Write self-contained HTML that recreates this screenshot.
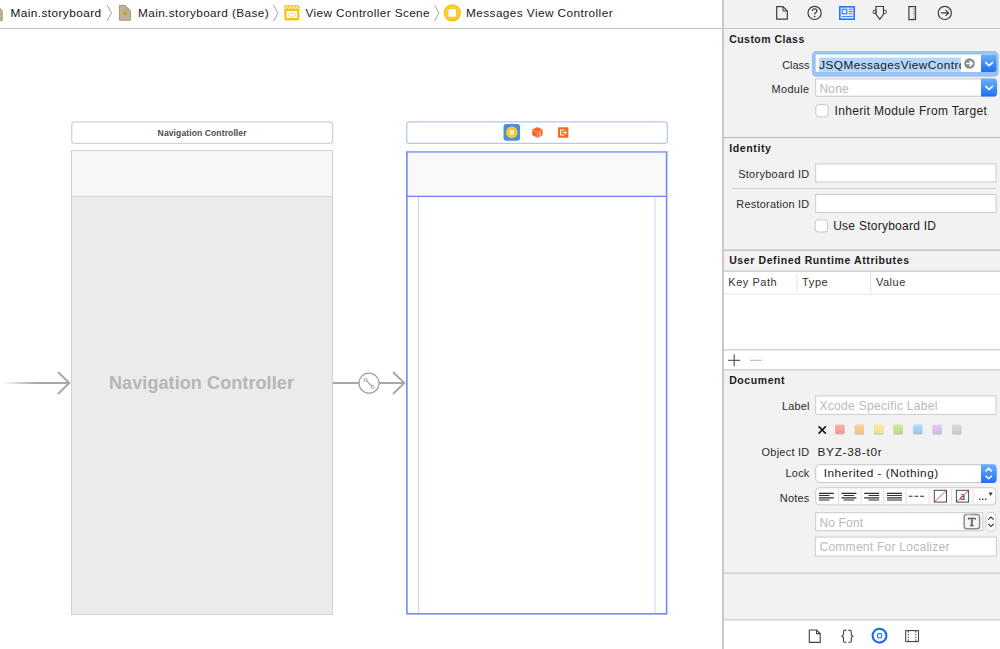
<!DOCTYPE html>
<html><head><meta charset="utf-8">
<style>
*{box-sizing:border-box;margin:0;padding:0}
html,body{width:1000px;height:649px;overflow:hidden;background:#fff;font-family:"Liberation Sans",sans-serif;}
.a{position:absolute}
.t{position:absolute;white-space:nowrap}
.fld{position:absolute;background:#fff;border:1px solid #cdcdcd;border-top-color:#c2c2c2}
.cb{position:absolute;width:14px;height:14px;background:#fff;border:1px solid #c4c4c4;border-radius:3.5px;box-shadow:0 .5px 0 rgba(0,0,0,.06)}
.hl{position:absolute;height:1px;background:#c4c4c4}
.sw{position:absolute;width:10px;height:9.5px;border-radius:1.5px;top:424.4px;box-shadow:0 1px 1px rgba(0,0,0,.22)}
.bbtn{position:absolute;width:16px;border-radius:0 3.5px 3.5px 0;background:linear-gradient(#62abfb,#1b6ff5)}
</style></head><body>
<!-- top jump bar -->
<div class="a" style="left:0;top:0;width:723px;height:29px;background:#fff;border-bottom:1px solid #c2c2c2"></div>
<svg class="a" style="left:0;top:0" width="723" height="28" viewBox="0 0 723 28">
  <path d="M-6 5.4 H-3.2 L2.2 10.6 V20.4 H-6 Z" fill="#b8b3a8" stroke="#b0965f" stroke-width="1"/>
  <g fill="none" stroke="#a4a4a4" stroke-width="1">
    <path d="M107 5 L111.5 13 L107 21"/>
    <path d="M273.5 5 L278 13 L273.5 21"/>
    <path d="M434.5 5 L439 13 L434.5 21"/>
  </g>
  <g>
    <path d="M119.4 5.4 H125 L130.4 10.6 V20.2 H119.4 Z" fill="#b8b3a8" stroke="#b0965f" stroke-width="1"/>
    <path d="M125 5.4 L130.4 10.6 H125 Z" fill="#a8a296" opacity=".55"/>
    <circle cx="125" cy="13.3" r="2.1" fill="#c9a114"/>
    <path d="M121.2 9.6 H124 M125 15.6 V18 H128.6" stroke="#cdb98a" stroke-width="0.8" fill="none"/>
  </g>
  <g>
    <rect x="284.3" y="5.3" width="15" height="15.2" rx="1.6" fill="#f6c416"/>
    <rect x="284.9" y="6.2" width="14.6" height="2.5" fill="#fff"/>
    <path d="M285 5.6 l2.4 3.3 M288.1 5.6 l2.4 3.3 M291.2 5.6 l2.4 3.3 M294.3 5.6 l2.4 3.3 M297.4 5.6 l2.2 3" stroke="#f6c416" stroke-width="1.5"/>
    <rect x="286.6" y="11" width="10.5" height="7" fill="#fff"/>
    <rect x="288.3" y="13" width="6.8" height="3.2" rx="1" fill="#fff" stroke="#f3cf7a" stroke-width="0.9"/>
  </g>
  <g>
    <circle cx="452.35" cy="12.8" r="8.6" fill="#f4bf12"/>
    <circle cx="452.35" cy="12.8" r="7.3" fill="#fad133"/>
    <rect x="447.3" y="8.1" width="9.6" height="9.6" rx="2" fill="#f3c535"/>
    <rect x="448.4" y="9.1" width="7.5" height="7.6" rx="1" fill="#fff"/>
  </g>
</svg>

<!-- canvas -->
<!-- nav controller title -->
<svg class="a" style="left:68px;top:118px" width="604" height="30" viewBox="68 118 604 30"><rect x="71.7" y="121.8" width="260.9" height="21.6" rx="3.2" fill="#fff" stroke="#d2d2d2" stroke-width="1.3"/><rect x="406.7" y="121.8" width="260.7" height="21.6" rx="3.2" fill="#fff" stroke="#b2caec" stroke-width="1.3"/></svg>
<!-- nav controller scene -->
<div class="a" style="left:71px;top:150px;width:262px;height:465px;border:1px solid #d2d2d2;background:#ebebeb"></div>
<div class="a" style="left:72px;top:151px;width:260px;height:46px;background:#f7f7f7;border-bottom:1px solid #d4d4d4"></div>
<!-- arrows -->
<svg class="a" style="left:0;top:360px" width="420" height="46" viewBox="0 360 420 46">
  <defs><linearGradient id="fade" x1="0" x2="1" y1="0" y2="0" gradientUnits="objectBoundingBox"><stop offset="0" stop-color="#a8a8a8" stop-opacity="0"/><stop offset="0.5" stop-color="#a8a8a8" stop-opacity="1"/><stop offset="1" stop-color="#a8a8a8"/></linearGradient></defs>
  <rect x="2" y="382" width="67" height="2" fill="url(#fade)"/>
  <path d="M58 372 L69.3 383 L58 394" fill="none" stroke="#a8a8a8" stroke-width="2"/>
  <path d="M333 383 H404" stroke="#a8a8a8" stroke-width="2"/>
  <path d="M393 372 L404.3 383 L393 394" fill="none" stroke="#a8a8a8" stroke-width="2"/>
  <circle cx="369" cy="383.2" r="10" fill="#fff" stroke="#a2a2a2" stroke-width="1.3"/>
  <path d="M365.6 379.9 L372.6 386.8" stroke="#a2a2a2" stroke-width="1.2"/>
  <circle cx="365.5" cy="379.8" r="1.5" fill="#fff" stroke="#a2a2a2" stroke-width="1"/>
  <circle cx="372.7" cy="386.9" r="1.5" fill="#fff" stroke="#a2a2a2" stroke-width="1"/>
</svg>
<!-- messages VC title -->

<svg class="a" style="left:500px;top:122px" width="72" height="21" viewBox="500 122 72 21">
  <rect x="503.5" y="124" width="16.6" height="16.8" rx="3" fill="#4a90d9"/>
  <circle cx="511.8" cy="132.4" r="5.8" fill="#fbc72e"/>
  <rect x="509.8" y="130.4" width="4" height="4" fill="#fff"/>
  <!-- cube -->
  <path d="M537.4 127 L542.6 129.6 V135.2 L537.4 137.8 L532.2 135.2 V129.6 Z" fill="#f2692a"/>
  <path d="M532.6 130 L537.4 132.3 L542.3 130 M537.4 132.3 V137.4" stroke="#fbb796" stroke-width="0.7" fill="none"/>
  <path d="M540 132.6 V135.6" stroke="#fff" stroke-width="1"/>
  <!-- exit -->
  <rect x="558" y="127.2" width="10.4" height="10.6" rx="0.8" fill="#f36c21"/>
  <path d="M564.6 130 H560.6 V135 H564.6" stroke="#fff" stroke-width="1.1" fill="none"/>
  <path d="M562.6 132.5 H566.2 M565 131 L566.6 132.5 L565 134" stroke="#fff" stroke-width="1" fill="none"/>
</svg>
<!-- messages VC scene -->
<svg class="a" style="left:400px;top:146px" width="274" height="476" viewBox="400 146 274 476">
  <rect x="406.9" y="151.8" width="259.7" height="262" fill="#fff"/>
  <rect x="406.9" y="151.8" width="259.7" height="44.6" fill="#f9f9f9"/>
  <rect x="418" y="197" width="1" height="416.5" fill="#cfd4fc"/>
  <rect x="654.6" y="197" width="1" height="416.5" fill="#cfd4fc"/>
  <path d="M406 196.4 H667" stroke="#6d80f1" stroke-width="1.3"/>
  <rect x="406.9" y="151.8" width="259.7" height="462" fill="none" stroke="#7389f3" stroke-width="1.6"/>
  <path d="M406 151.4 H667.5" stroke="#c4cffb" stroke-width="1" opacity=".55"/>
</svg>
<!-- sidebar -->
<div class="a" id="side" style="left:722px;top:0;width:278px;height:649px;background:#f2f2f2;border-left:2px solid #c9c9c9"></div>
<div class="hl" style="left:724px;top:28px;width:276px;background:#c2c2c2"></div><div class="hl" style="left:724px;top:29px;width:276px;background:#f8f8f8"></div>
<!-- inspector tabs -->
<svg class="a" style="left:770px;top:0" width="190" height="28" viewBox="770 0 190 28">
  <g fill="none" stroke="#3e3e3e" stroke-width="1.2">
    <path d="M776.7 6.7 H783 L787.3 11 V19.1 H776.7 Z"/>
    <path d="M783 6.7 V11 H787.3" stroke-width="1"/>
    <circle cx="814.6" cy="12.9" r="6.6"/>
    <path d="M812.4 10.9 C812.4 8.2 816.9 8.2 816.9 10.9 C816.9 12.6 814.6 12.5 814.6 14.6" stroke-width="1.25"/>
    <circle cx="944.8" cy="12.9" r="6.6"/>
    <path d="M940.8 12.9 H948.3 M945.5 9.9 L948.6 12.9 L945.5 15.9"/>
    <path d="M876 6.5 H883.5 V14.4 L879.75 19.3 L876 14.4 Z"/>
    <rect x="873.2" y="10.3" width="2.8" height="3.2" rx=".8" stroke-width="1"/>
    <rect x="883.5" y="10.3" width="2.8" height="3.2" rx=".8" stroke-width="1"/>
    <rect x="908.9" y="6.6" width="6.6" height="13"/>
    <path d="M912.8 9 H915.6 M913.6 11.2 H915.6 M912.8 13.4 H915.6 M913.6 15.6 H915.6 M912.8 17.8 H915.6" stroke-width="0.8" stroke="#777"/>
  </g>
  <circle cx="814.6" cy="16.6" r=".85" fill="#3e3e3e"/>
  <rect x="839" y="6" width="16" height="14" fill="#2277f6"/>
  <rect x="840.6" y="7.6" width="12.8" height="10.8" fill="#e4eefe"/>
  <rect x="841.6" y="8.6" width="5.8" height="5.8" fill="#4a8ff7"/>
  <circle cx="844.5" cy="11.5" r="1.7" fill="#fff"/>
  <path d="M848.8 9.3 H852.6 M848.8 11.5 H852.6 M848.8 13.7 H852.6 M841.8 16.5 H852.6" stroke="#3a85f7" stroke-width="1.1"/>
</svg>

<!-- Custom class -->
<svg class="a" style="left:808px;top:48px" width="192" height="52" viewBox="808 48 192 52">
  <defs><linearGradient id="bb" x1="0" x2="0" y1="0" y2="1"><stop offset="0" stop-color="#6ab2fb"/><stop offset="1" stop-color="#1c70f4"/></linearGradient></defs>
  <rect x="811.9" y="51.1" width="186.8" height="25.6" rx="4.5" fill="#98c3f4"/>
  <path d="M815.7 54.5 H993.5 a3.2 3.2 0 0 1 3.2 3.2 V68.8 a3.2 3.2 0 0 1 -3.2 3.2 H815.7 Z" fill="#fff"/>
  <rect x="818.9" y="57.6" width="141.9" height="14.2" fill="#b4d6fc"/>
  <path d="M981 54.4 H993.5 a3.2 3.2 0 0 1 3.2 3.2 V68.8 a3.2 3.2 0 0 1 -3.2 3.2 H981 Z" fill="url(#bb)"/>
  <circle cx="969.5" cy="63.5" r="5.3" fill="#8c8c8c"/>
  <path d="M966.2 63.5 H971.6 M969.6 60.9 L972.4 63.5 L969.6 66.1" stroke="#fff" stroke-width="1.5" fill="none"/>
  <path d="M985.3 62.2 L989.1 65.7 L992.9 62.2" stroke="#fff" stroke-width="1.7" fill="none"/>
  <!-- module -->
  <path d="M815.7 78.9 H993.5 a3.2 3.2 0 0 1 3.2 3.2 V93 a3.2 3.2 0 0 1 -3.2 3.2 H815.7 Z" fill="#fff" stroke="#cacaca" stroke-width="1"/>
  <path d="M981 78.4 H993.6 a3.4 3.4 0 0 1 3.4 3.4 V93.2 a3.4 3.4 0 0 1 -3.4 3.4 H981 Z" fill="url(#bb)"/>
  <path d="M985.3 85.9 L989.1 89.4 L992.9 85.9" stroke="#fff" stroke-width="1.7" fill="none"/>
</svg>
<svg class="a" style="left:722px;top:98px" width="278" height="551" viewBox="722 98 278 551">
  <defs>
    <linearGradient id="bb2" x1="0" x2="0" y1="0" y2="1"><stop offset="0" stop-color="#6ab2fb"/><stop offset="1" stop-color="#1c70f4"/></linearGradient>
    <linearGradient id="g1" x1="0" x2="0" y1="0" y2="1"><stop offset="0" stop-color="#fbb0ab"/><stop offset="1" stop-color="#f79691"/></linearGradient>
    <linearGradient id="g2" x1="0" x2="0" y1="0" y2="1"><stop offset="0" stop-color="#fcd4a2"/><stop offset="1" stop-color="#f8c17f"/></linearGradient>
    <linearGradient id="g3" x1="0" x2="0" y1="0" y2="1"><stop offset="0" stop-color="#faeca4"/><stop offset="1" stop-color="#f5df7e"/></linearGradient>
    <linearGradient id="g4" x1="0" x2="0" y1="0" y2="1"><stop offset="0" stop-color="#d1e8a2"/><stop offset="1" stop-color="#bcdd7e"/></linearGradient>
    <linearGradient id="g5" x1="0" x2="0" y1="0" y2="1"><stop offset="0" stop-color="#b8d9fc"/><stop offset="1" stop-color="#9ac7f9"/></linearGradient>
    <linearGradient id="g6" x1="0" x2="0" y1="0" y2="1"><stop offset="0" stop-color="#e6cdf2"/><stop offset="1" stop-color="#d8b7e8"/></linearGradient>
    <linearGradient id="g7" x1="0" x2="0" y1="0" y2="1"><stop offset="0" stop-color="#dbdbdb"/><stop offset="1" stop-color="#c9c9c9"/></linearGradient>
  </defs>
  <!-- checkboxes -->
  <rect x="815.8" y="104.6" width="12.5" height="12.2" rx="3" fill="#fff" stroke="#c6c6c6" stroke-width="1"/>
  <rect x="815.2" y="219.8" width="12.5" height="12.2" rx="3" fill="#fff" stroke="#c6c6c6" stroke-width="1"/>
  <!-- dividers -->
  <rect x="724" y="136.9" width="277" height="1.2" fill="#c0c0c0"/>
  <rect x="732" y="188" width="264" height="1" fill="#d3d3d3"/>
  <rect x="724" y="249.5" width="277" height="1.5" fill="#c3c3c3"/>
  <rect x="724" y="572.6" width="277" height="1.1" fill="#c3c3c3"/>
  <!-- identity fields -->
  <rect x="815.7" y="163.9" width="180.4" height="18" fill="#fff" stroke="#cbcbcb" stroke-width="1"/>
  <rect x="815.7" y="194.5" width="180.4" height="18" fill="#fff" stroke="#cbcbcb" stroke-width="1"/>
  <!-- table -->
  <rect x="724" y="271" width="277" height="99" fill="#fff"/>
  <rect x="724" y="270.6" width="277" height="1.1" fill="#c2c2c2"/>
  <rect x="724" y="293.8" width="277" height="1" fill="#e3e3e3"/>
  <rect x="796.4" y="273.4" width="1" height="18.6" fill="#e0e0e0"/>
  <rect x="870.1" y="273.4" width="1" height="18.6" fill="#e0e0e0"/>
  <rect x="724" y="349.3" width="277" height="1.1" fill="#c6c6c6"/>
  <rect x="724" y="369.3" width="277" height="1.1" fill="#c2c2c2"/>
  <path d="M728.2 360.3 H740.2 M734.2 354.3 V366.3" stroke="#3c3c3c" stroke-width="1"/>
  <path d="M750 360.3 H761.8" stroke="#b4b4b4" stroke-width="1"/>
  <!-- document -->
  <rect x="815.7" y="395.9" width="180.4" height="18.5" fill="#fff" stroke="#cbcbcb" stroke-width="1"/>
  <path d="M818.6 426.4 L825.8 433.6 M825.8 426.4 L818.6 433.6" stroke="#1a1a1a" stroke-width="1.6"/>
  <g opacity=".22" fill="#000"><rect x="835.3" y="425.6" width="9.2" height="8.8" rx="1.2"/><rect x="854.8" y="425.6" width="9.2" height="8.8" rx="1.2"/><rect x="874.2" y="425.6" width="9.2" height="8.8" rx="1.2"/><rect x="893.6" y="425.6" width="9.2" height="8.8" rx="1.2"/><rect x="913.1" y="425.6" width="9.2" height="8.8" rx="1.2"/><rect x="932.6" y="425.6" width="9.2" height="8.8" rx="1.2"/><rect x="952.2" y="425.6" width="9.2" height="8.8" rx="1.2"/></g>
  <rect x="835.2" y="424.5" width="9.2" height="9.1" rx="1" fill="url(#g1)"/>
  <rect x="854.7" y="424.5" width="9.2" height="9.1" rx="1" fill="url(#g2)"/>
  <rect x="874.1" y="424.5" width="9.2" height="9.1" rx="1" fill="url(#g3)"/>
  <rect x="893.6" y="424.5" width="9.2" height="9.1" rx="1" fill="url(#g4)"/>
  <rect x="913.1" y="424.5" width="9.2" height="9.1" rx="1" fill="url(#g5)"/>
  <rect x="932.6" y="424.5" width="9.2" height="9.1" rx="1" fill="url(#g6)"/>
  <rect x="952.1" y="424.5" width="9.2" height="9.1" rx="1" fill="url(#g7)"/>
  <!-- lock popup -->
  <rect x="815.7" y="464.7" width="180.4" height="17.8" rx="3.6" fill="#fff" stroke="#c6c6c6" stroke-width="1"/>
  <path d="M981 464.2 H992.8 a3.8 3.8 0 0 1 3.8 3.8 V479.2 a3.8 3.8 0 0 1 -3.8 3.8 H981 Z" fill="url(#bb2)"/>
  <path d="M985.6 471.4 L988.7 468.4 L991.8 471.4 M985.6 475.8 L988.7 478.8 L991.8 475.8" stroke="#fff" stroke-width="1.5" fill="none"/>
  <!-- notes segmented -->
  <rect x="815.7" y="487.7" width="180" height="17.2" rx="3.6" fill="#fdfdfd" stroke="#cdcdcd" stroke-width="1"/>
  <g stroke="#e2e2e2" stroke-width="1"><path d="M838.5 488.4 V504.4 M861 488.4 V504.4 M883.7 488.4 V504.4 M906 488.4 V504.4 M929.2 488.4 V504.4 M951.6 488.4 V504.4 M973 488.4 V504.4"/></g>
  <g stroke="#2e2e2e" stroke-width="1.15">
    <path d="M819 493.3 H833.8 M819 495.5 H829.5 M819 497.8 H833.8 M819 500 H829.5"/>
    <path d="M841.4 493.3 H856.4 M843.6 495.5 H854.2 M841.4 497.8 H856.4 M843.6 500 H854.2"/>
    <path d="M864.2 493.3 H879.2 M868.5 495.5 H879.2 M864.2 497.8 H879.2 M868.5 500 H879.2"/>
    <path d="M887 493.3 H902 M887 495.5 H902 M887 497.8 H902 M887 500 H902"/>
    <path d="M908.8 496.2 H912.6 M914.5 496.2 H918.3 M920.2 496.2 H924"/>
  </g>
  <rect x="934.3" y="490.3" width="12.2" height="11.8" fill="#fff" stroke="#4a4a4a" stroke-width="1"/>
  <path d="M934.8 501.6 L946 490.8" stroke="#f03a3a" stroke-width="0.9"/>
  <rect x="956.4" y="490.3" width="12.2" height="11.8" fill="#fff" stroke="#4a4a4a" stroke-width="1"/>
  <text x="962.5" y="499.8" font-family="Liberation Serif" font-size="11.5" text-anchor="middle" fill="#222">a</text>
  <path d="M956.9 501.6 L968.1 490.8" stroke="#f03a3a" stroke-width="0.9"/>
  <g fill="#333"><rect x="979" y="498.6" width="1.4" height="1.4"/><rect x="982" y="498.6" width="1.4" height="1.4"/><rect x="985" y="498.6" width="1.4" height="1.4"/><path d="M988.6 492.4 H992.6 L990.6 496 Z"/></g>
  <!-- font field -->
  <rect x="815.7" y="512.7" width="167" height="18" fill="#fff" stroke="#cbcbcb" stroke-width="1"/>
  <rect x="964.2" y="514.4" width="15.4" height="14.4" rx="2.2" fill="#f6f6f6" stroke="#8c8c8c" stroke-width="1.5"/>
  <path d="M966.4 514.3 H970.4" stroke="#c4c4c4" stroke-width="1"/>
  <text x="971.9" y="526.2" font-family="Liberation Serif" font-size="12.5" text-anchor="middle" fill="#4a4a4a" stroke="#4a4a4a" stroke-width=".3">T</text>
  <rect x="986" y="512.3" width="9.8" height="19" rx="4.9" fill="#fff" stroke="#cfcfcf" stroke-width="1"/>
  <path d="M988.2 519.6 L990.9 517 L993.6 519.6 M988.2 524 L990.9 526.6 L993.6 524" stroke="#333" stroke-width="1.1" fill="none"/>
  <!-- comment field -->
  <rect x="815.3" y="537.1" width="181" height="19" fill="#fff" stroke="#cbcbcb" stroke-width="1"/>
  <!-- library bar -->
  <rect x="724" y="619.4" width="277" height="30" fill="#fff"/>
  <rect x="724" y="619.3" width="277" height="1.1" fill="#c4c4c4"/>
  <g fill="none" stroke="#444" stroke-width="1.1">
    <path d="M809.3 630 H816.6 L820.2 633.6 V642.4 H809.3 Z"/>
    <path d="M816.6 630 V633.6 H820.2"/>
    <path d="M846.4 630.1 C843.6 630.1 843.5 630.8 843.5 632.6 V634 C843.5 635.5 843 636.2 841.4 636.2 C843 636.2 843.5 636.9 843.5 638.4 V639.9 C843.5 641.7 843.6 642.3 846.4 642.3"/>
    <path d="M848.4 630.1 C851.2 630.1 851.3 630.8 851.3 632.6 V634 C851.3 635.5 851.8 636.2 853.4 636.2 C851.8 636.2 851.3 636.9 851.3 638.4 V639.9 C851.3 641.7 851.2 642.3 848.4 642.3"/>
    <rect x="905.7" y="630.6" width="12.8" height="11"/>
    <path d="M908.4 631 V641.6 M915.8 631 V641.6" stroke-dasharray="1.5 1.3" stroke-width="1"/>
  </g>
  <circle cx="879.5" cy="635.7" r="6.9" fill="#fff" stroke="#1a6cf2" stroke-width="2.1"/>
  <rect x="877.5" y="633.5" width="4.2" height="4.4" rx="0.6" fill="#e4edfd" stroke="#1a6cf2" stroke-width="1"/>
</svg>
<div class="t " style="left:10.4px;top:5px;font-size:11.8px;line-height:17px;letter-spacing:0.440px;color:#111;">Main.storyboard</div>
<div class="t " style="left:138.0px;top:5px;font-size:11.8px;line-height:17px;letter-spacing:0.381px;color:#1a1a1a;">Main.storyboard (Base)</div>
<div class="t " style="left:305.6px;top:5px;font-size:11.8px;line-height:17px;letter-spacing:0.376px;color:#1a1a1a;">View Controller Scene</div>
<div class="t " style="left:466.0px;top:5px;font-size:11.8px;line-height:17px;letter-spacing:0.424px;color:#1a1a1a;">Messages View Controller</div>
<div class="t " style="left:157.6px;top:127px;font-size:8.6px;line-height:13px;letter-spacing:0.077px;color:#4c4c4c;font-weight:bold;">Navigation Controller</div>
<div class="t " style="left:109.0px;top:371px;font-size:18px;line-height:25px;letter-spacing:0.094px;color:#b6b6b6;font-weight:bold;">Navigation Controller</div>
<div class="t " style="left:729.2px;top:31px;font-size:10.5px;line-height:16px;letter-spacing:0.456px;color:#1c1c1c;font-weight:bold;">Custom Class</div>
<div class="t " style="left:729.2px;top:140px;font-size:10.6px;line-height:16px;letter-spacing:0.591px;color:#1c1c1c;font-weight:bold;">Identity</div>
<div class="t " style="left:729.2px;top:252px;font-size:10.5px;line-height:16px;letter-spacing:0.600px;color:#1c1c1c;font-weight:bold;">User Defined Runtime Attributes</div>
<div class="t " style="left:729.2px;top:372px;font-size:10.5px;line-height:16px;letter-spacing:0.582px;color:#1c1c1c;font-weight:bold;">Document</div>
<div class="t " style="left:782.2px;top:57px;font-size:10.9px;line-height:16px;letter-spacing:0.013px;color:#2a2a2a;">Class</div>
<div class="t " style="left:771.6px;top:81px;font-size:10.9px;line-height:16px;letter-spacing:0.361px;color:#2a2a2a;">Module</div>
<div class="t " style="left:738.2px;top:166px;font-size:10.9px;line-height:16px;letter-spacing:0.315px;color:#2a2a2a;">Storyboard ID</div>
<div class="t " style="left:736.3px;top:196px;font-size:10.9px;line-height:16px;letter-spacing:0.256px;color:#2a2a2a;">Restoration ID</div>
<div class="t " style="left:782.1px;top:398px;font-size:10.9px;line-height:16px;letter-spacing:0.149px;color:#2a2a2a;">Label</div>
<div class="t " style="left:761.6px;top:444px;font-size:10.9px;line-height:16px;letter-spacing:0.277px;color:#2a2a2a;">Object ID</div>
<div class="t " style="left:785.6px;top:465px;font-size:10.9px;line-height:16px;letter-spacing:0.221px;color:#2a2a2a;">Lock</div>
<div class="t " style="left:779.8px;top:490px;font-size:10.9px;line-height:16px;letter-spacing:0.249px;color:#2a2a2a;">Notes</div>
<div class="t " style="left:819.2px;top:57px;font-size:11.8px;line-height:17px;letter-spacing:0.434px;color:#1a1a1a;width:141.6px;overflow:hidden;">JSQMessagesViewController</div>
<div class="t " style="left:819.5px;top:80px;font-size:12px;line-height:18px;letter-spacing:0.203px;color:#b9b9b9;">None</div>
<div class="t " style="left:834.5px;top:102px;font-size:12px;line-height:18px;letter-spacing:0.337px;color:#222;">Inherit Module From Target</div>
<div class="t " style="left:833.2px;top:217px;font-size:12px;line-height:18px;letter-spacing:0.258px;color:#222;">Use Storyboard ID</div>
<div class="t " style="left:728.3px;top:274px;font-size:11px;line-height:16px;letter-spacing:0.532px;color:#333;">Key Path</div>
<div class="t " style="left:802.1px;top:274px;font-size:11px;line-height:16px;letter-spacing:0.585px;color:#333;">Type</div>
<div class="t " style="left:875.9px;top:274px;font-size:11px;line-height:16px;letter-spacing:0.534px;color:#333;">Value</div>
<div class="t " style="left:819.4px;top:397px;font-size:12px;line-height:18px;letter-spacing:0.316px;color:#b9b9b9;">Xcode Specific Label</div>
<div class="t " style="left:817.5px;top:444px;font-size:11.8px;line-height:17px;letter-spacing:0.710px;color:#222;">BYZ-38-t0r</div>
<div class="t " style="left:823.7px;top:465px;font-size:11.8px;line-height:17px;letter-spacing:0.475px;color:#222;">Inherited - (Nothing)</div>
<div class="t " style="left:819.5px;top:514px;font-size:12px;line-height:18px;letter-spacing:0.145px;color:#b9b9b9;">No Font</div>
<div class="t " style="left:819.5px;top:538px;font-size:12px;line-height:18px;letter-spacing:0.261px;color:#b9b9b9;">Comment For Localizer</div>
</body></html>
